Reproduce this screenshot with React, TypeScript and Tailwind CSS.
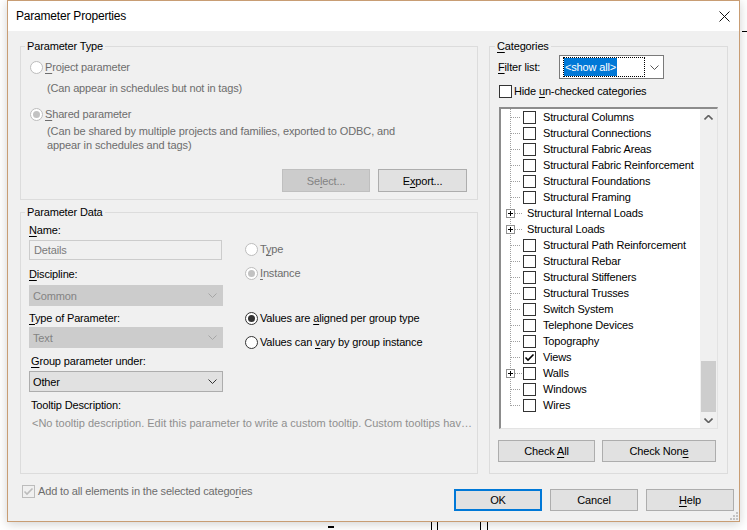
import React from 'react';

type Item = { label: string; check?: boolean; checked?: boolean; plus?: boolean };

const items: Item[] = [
  { label: 'Structural Columns', check: true },
  { label: 'Structural Connections', check: true },
  { label: 'Structural Fabric Areas', check: true },
  { label: 'Structural Fabric Reinforcement', check: true },
  { label: 'Structural Foundations', check: true },
  { label: 'Structural Framing', check: true },
  { label: 'Structural Internal Loads', plus: true },
  { label: 'Structural Loads', plus: true },
  { label: 'Structural Path Reinforcement', check: true },
  { label: 'Structural Rebar', check: true },
  { label: 'Structural Stiffeners', check: true },
  { label: 'Structural Trusses', check: true },
  { label: 'Switch System', check: true },
  { label: 'Telephone Devices', check: true },
  { label: 'Topography', check: true },
  { label: 'Views', check: true, checked: true },
  { label: 'Walls', check: true, plus: true },
  { label: 'Windows', check: true },
  { label: 'Wires', check: true },
];

function U({ children }: { children: React.ReactNode }) {
  return <span className="underline decoration-1 underline-offset-[2px]">{children}</span>;
}

function Radio({ checked = false, disabled = false }: { checked?: boolean; disabled?: boolean }) {
  return (
    <svg width="13" height="13" viewBox="0 0 13 13" className="shrink-0">
      <circle cx="6.5" cy="6.5" r="6" fill="#ffffff" stroke={disabled ? '#bcbcbc' : '#333333'} />
      {checked && <circle cx="6.5" cy="6.5" r="3.5" fill={disabled ? '#c2c2c2' : '#333333'} />}
    </svg>
  );
}

function Check({ checked = false, disabled = false }: { checked?: boolean; disabled?: boolean }) {
  return (
    <svg width="13" height="13" viewBox="0 0 13 13" className="shrink-0">
      <rect x="0.5" y="0.5" width="12" height="12" fill={disabled ? '#f0f0f0' : '#ffffff'} stroke={disabled ? '#bcbcbc' : '#333333'} />
      {checked && (
        <path d="M2.5 6.5 L5 9 L10.5 3.5" fill="none" stroke={disabled ? '#bcbcbc' : '#000000'} strokeWidth="1.6" />
      )}
    </svg>
  );
}

function Chevron({ color, up = false }: { color: string; up?: boolean }) {
  return (
    <svg width="9" height="5" viewBox="0 0 9 5" className="shrink-0">
      <path d={up ? 'M0.5 4.5 L4.5 0.5 L8.5 4.5' : 'M0.5 0.5 L4.5 4.5 L8.5 0.5'} fill="none" stroke={color} strokeWidth={up ? 1.6 : 1} />
    </svg>
  );
}

function Button({
  className = '',
  children,
  disabled = false,
  focused = false,
}: {
  className?: string;
  children: React.ReactNode;
  disabled?: boolean;
  focused?: boolean;
}) {
  const look = disabled
    ? 'border border-[#bfbfbf] bg-[#cccccc] text-[#838383]'
    : focused
      ? 'border-2 border-[#0078d7] bg-[#e1e1e1]'
      : 'border border-[#adadad] bg-[#e1e1e1]';
  return <div className={`flex shrink-0 items-center justify-center ${look} ${className}`}>{children}</div>;
}

function Select({ value, disabled = false, className = '' }: { value: string; disabled?: boolean; className?: string }) {
  const look = disabled
    ? 'border border-[#cccccc] bg-[#cccccc] text-[#838383]'
    : 'border border-[#adadad] bg-[#e1e1e1] text-black';
  return (
    <div className={`flex h-[21px] w-[194px] items-center justify-between pl-[3px] pr-[5px] ${look} ${className}`}>
      <span>{value}</span>
      <Chevron color={disabled ? '#a6a6a6' : '#333333'} />
    </div>
  );
}

function TreeGlyph({ plus = false, last = false }: { plus?: boolean; last?: boolean }) {
  return (
    <svg width="22" height="16" viewBox="0 0 22 16" className="shrink-0">
      <line x1="9.5" y1="0" x2="9.5" y2={last ? 9 : 16} stroke="#a0a0a0" strokeDasharray="1 1" />
      <line x1="10" y1="8.5" x2={plus ? 24 : 20} y2="8.5" stroke="#a0a0a0" strokeDasharray="1 1" />
      {plus && (
        <g>
          <rect x="5.5" y="4.5" width="8" height="8" fill="#ffffff" stroke="#919191" />
          <path d="M7 8.5h5M9.5 6v5" stroke="#000000" />
        </g>
      )}
    </svg>
  );
}

function CategoryList() {
  return (
    <div className="ml-[1px] mt-[8px] flex h-[322px] w-[219px] border-b border-l-2 border-r border-t-2 border-b-[#e3e3e3] border-l-[#8c8c8c] border-r-[#e3e3e3] border-t-[#8c8c8c] bg-white">
      <div className="flex-1 overflow-hidden">
        {items.map((it, i) => (
          <div key={it.label} className="flex h-4 items-center whitespace-nowrap">
            <TreeGlyph plus={it.plus} last={i === items.length - 1} />
            {it.check && <Check checked={it.checked} />}
            <span className={it.check ? 'ml-[7px]' : 'ml-[4px]'}>{it.label}</span>
          </div>
        ))}
      </div>
      <div className="flex w-[17px] flex-col bg-[#f0f0f0]">
        <div className="flex h-[17px] items-center justify-center">
          <Chevron color="#606060" up />
        </div>
        <div className="flex flex-1 flex-col justify-end">
          <div className="ml-[1px] h-[51px] w-[15px] bg-[#cdcdcd]" />
        </div>
        <div className="flex h-[16px] items-center justify-center">
          <svg width="9" height="5" viewBox="0 0 9 5">
            <path d="M0.5 0.5 L4.5 4.5 L8.5 0.5" fill="none" stroke="#606060" strokeWidth="1.6" />
          </svg>
        </div>
      </div>
    </div>
  );
}

export default function App() {
  return (
    <div className="relative h-[530px] w-[747px] overflow-hidden bg-white font-['Liberation_Sans',Arial,sans-serif] text-[11px] leading-4 tracking-[-0.15px] text-black">
      {/* desktop bits peeking out behind the dialog */}
      <div className="absolute left-[742px] top-[31px] h-px w-[5px] bg-black" />
      <div className="absolute left-[328px] top-[526px] h-[2px] w-[6px] bg-black" />
      <div className="absolute left-[431px] top-[522px] h-[8px] w-px bg-black" />
      <div className="absolute left-[437px] top-[522px] h-[8px] w-px bg-black" />
      <div className="absolute left-[480px] top-[522px] h-[8px] w-px bg-black" />
      <div className="absolute left-[487px] top-[522px] h-[8px] w-px bg-black" />

      <div className="relative ml-[7px] h-[522px] w-[733px] border border-[#c89d74] shadow-[0_2px_10px_rgba(0,0,0,0.18)]">
        <div className="flex h-[30px] items-center justify-between bg-white pl-[8px] pr-[9px]">
          <span className="text-[12px] tracking-[-0.2px]">Parameter Properties</span>
          <svg width="11" height="11" viewBox="0 0 11 11">
            <path d="M0.5 0.5 L10.5 10.5 M10.5 0.5 L0.5 10.5" stroke="#111111" strokeWidth="1" />
          </svg>
        </div>

        <div className="flex h-[490px] flex-col bg-[#f0f0f0] pl-[12px] pr-[11px] pt-[7px]">
          <div className="flex gap-[11px]">
            <div className="flex w-[458px] flex-col gap-[4px]">
              <fieldset className="h-[162px] border border-[#dcdcdc]">
                <legend className="ml-[4px] px-[2px] leading-4">Parameter Type</legend>
                <div className="flex flex-col whitespace-nowrap text-[#6d6d6d]">
                  <div className="ml-[9px] mt-[5px] flex h-4 items-center gap-[2px]">
                    <Radio disabled />
                    <span>
                      <U>P</U>roject parameter
                    </span>
                  </div>
                  <div className="ml-[26px] mt-[5px] h-4">(Can appear in schedules but not in tags)</div>
                  <div className="ml-[9px] mt-[10px] flex h-4 items-center gap-[2px]">
                    <Radio disabled checked />
                    <span>
                      <U>S</U>hared parameter
                    </span>
                  </div>
                  <div className="ml-[26px] mt-[2px] leading-[14px] tracking-[-0.1px]">
                    (Can be shared by multiple projects and families, exported to ODBC, and
                    <br />
                    appear in schedules and tags)
                  </div>
                  <div className="mt-[17px] flex justify-end gap-[8px] pr-[10px] text-black">
                    <Button disabled className="h-[23px] w-[88px]">
                      <span>
                        Se<U>l</U>ect...
                      </span>
                    </Button>
                    <Button className="h-[23px] w-[89px]">
                      <span>
                        E<U>x</U>port...
                      </span>
                    </Button>
                  </div>
                </div>
              </fieldset>

              <fieldset className="h-[270px] border border-[#dcdcdc]">
                <legend className="ml-[4px] px-[2px] leading-4">Parameter Data</legend>
                <div className="flex">
                  <div className="ml-[8px] flex w-[194px] flex-col">
                    <div className="mt-[2px] h-4">
                      <U>N</U>ame:
                    </div>
                    <div className="mt-[2px] flex h-[20px] w-[193px] items-center border border-[#cccccc] bg-[#f0f0f0] pl-[4px] text-[#7a7a7a]">
                      Details
                    </div>
                    <div className="mt-[6px] h-4">
                      <U>D</U>iscipline:
                    </div>
                    <Select value="Common" disabled className="mt-[3px]" />
                    <div className="mt-[4px] h-4">
                      <U>T</U>ype of Parameter:
                    </div>
                    <Select value="Text" disabled className="mt-[1px]" />
                    <div className="ml-[2px] mt-[5px] h-4">
                      <U>G</U>roup parameter under:
                    </div>
                    <Select value="Other" className="mt-[2px]" />
                  </div>
                  <div className="ml-[22px] flex flex-col whitespace-nowrap">
                    <div className="mt-[21px] flex h-4 items-center gap-[2px] text-[#6d6d6d]">
                      <Radio disabled />
                      <span>
                        T<U>y</U>pe
                      </span>
                    </div>
                    <div className="mt-[8px] flex h-4 items-center gap-[2px] text-[#6d6d6d]">
                      <Radio disabled checked />
                      <span>
                        <U>I</U>nstance
                      </span>
                    </div>
                    <div className="mt-[29px] flex h-4 items-center gap-[2px]">
                      <Radio checked />
                      <span>
                        Values are <U>a</U>ligned per group type
                      </span>
                    </div>
                    <div className="mt-[8px] flex h-4 items-center gap-[2px]">
                      <Radio />
                      <span>
                        Values can <U>v</U>ary by group instance
                      </span>
                    </div>
                  </div>
                </div>
                <div className="ml-[10px] mt-[5px] h-4">Tooltip Description:</div>
                <div className="ml-[11px] mt-[2px] h-4 w-[442px] overflow-hidden whitespace-nowrap tracking-normal text-[#8f8f8f]">
                  &lt;No tooltip description. Edit this parameter to write a custom tooltip. Custom tooltips hav…
                </div>
              </fieldset>
            </div>

            <fieldset className="h-[436px] w-[239px] border border-[#dcdcdc]">
              <legend className="ml-[5px] px-[2px] leading-4">
                <U>C</U>ategories
              </legend>
              <div className="flex flex-col pl-[8px]">
                <div className="mt-[1px] flex h-[24px] items-center">
                  <span className="w-[61px]">
                    <U>F</U>ilter list:
                  </span>
                  <div className="flex h-[24px] w-[105px] items-center justify-between border border-[#7a7a7a] bg-white pl-[3px] pr-[4px]">
                    <div className="flex h-[20px] w-[82px] items-stretch border border-dotted border-black">
                      <span className="flex items-center bg-[#0078d7] px-[1px] text-white">&lt;show all&gt;</span>
                    </div>
                    <Chevron color="#555555" />
                  </div>
                </div>
                <div className="ml-[1px] mt-[4px] flex h-4 items-center gap-[2px]">
                  <Check />
                  <span>
                    Hide <U>u</U>n-checked categories
                  </span>
                </div>
                <CategoryList />
                <div className="mt-[11px] flex gap-[7px]">
                  <Button className="h-[22px] w-[97px]">
                    <span>
                      Check <U>A</U>ll
                    </span>
                  </Button>
                  <Button className="h-[22px] w-[114px]">
                    <span>
                      Check Non<U>e</U>
                    </span>
                  </Button>
                </div>
              </div>
            </fieldset>
          </div>

          <div className="flex justify-between">
            <div className="ml-[2px] mt-[9px] flex h-4 items-center gap-[3px] text-[#6d6d6d]">
              <Check checked disabled />
              <span>
                Add to all elements in the selected catego<U>r</U>ies
              </span>
            </div>
            <div className="-mr-[6px] mt-[15px] flex gap-[8px]">
              <Button focused className="h-[22px] w-[88px]">
                OK
              </Button>
              <Button className="h-[22px] w-[88px]">Cancel</Button>
              <Button className="h-[22px] w-[88px]">
                <span>
                  <U>H</U>elp
                </span>
              </Button>
            </div>
          </div>
        </div>

        <svg width="8" height="8" viewBox="0 0 8 8" className="absolute bottom-[1px] right-[1px]">
          <g fill="#c2c2c2">
            <rect x="6" y="0" width="2" height="2" />
            <rect x="3" y="3" width="2" height="2" />
            <rect x="6" y="3" width="2" height="2" />
            <rect x="0" y="6" width="2" height="2" />
            <rect x="3" y="6" width="2" height="2" />
            <rect x="6" y="6" width="2" height="2" />
          </g>
        </svg>
      </div>
    </div>
  );
}
